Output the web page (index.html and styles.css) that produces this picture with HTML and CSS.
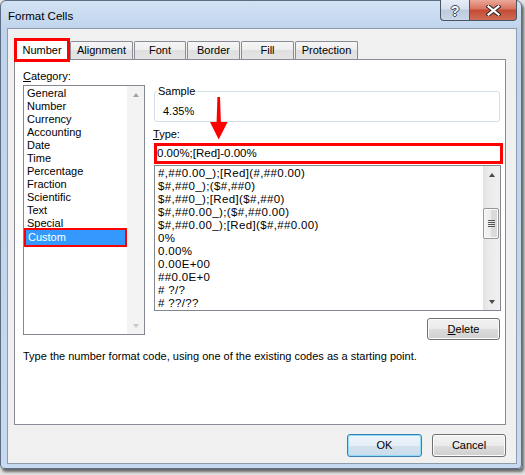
FILE: index.html
```html
<!DOCTYPE html>
<html>
<head>
<meta charset="utf-8">
<title>Format Cells</title>
<link rel="stylesheet" href="styles.css">
</head>
<body>
<div class="window">
  <div class="titlebar">
    <span class="title">Format Cells</span>
    <div class="caption">
      <div class="cap-btn help">?</div>
      <div class="cap-btn close">
        <svg width="15" height="11" viewBox="0 0 15 11">
          <path d="M2.5 1.5 L12.5 9.5 M12.5 1.5 L2.5 9.5" stroke="#3b2a2a" stroke-width="4.2" stroke-linecap="square" fill="none"/>
          <path d="M2.5 1.5 L12.5 9.5 M12.5 1.5 L2.5 9.5" stroke="#ffffff" stroke-width="2.2" stroke-linecap="square" fill="none"/>
        </svg>
      </div>
    </div>
  </div>
  <div class="client">
    <div class="tabs">
      <div class="tab selected">Number</div>
      <div class="tab t-align">Alignment</div>
      <div class="tab t-font">Font</div>
      <div class="tab t-border">Border</div>
      <div class="tab t-fill">Fill</div>
      <div class="tab t-prot">Protection</div>
    </div>
    <div class="panel">
      <div class="cols">
        <div class="left">
          <div class="label"><u>C</u>ategory:</div>
          <div class="listbox cat">
            <div class="items">
              <div class="item">General</div>
              <div class="item">Number</div>
              <div class="item">Currency</div>
              <div class="item">Accounting</div>
              <div class="item">Date</div>
              <div class="item">Time</div>
              <div class="item">Percentage</div>
              <div class="item">Fraction</div>
              <div class="item">Scientific</div>
              <div class="item">Text</div>
              <div class="item">Special</div>
              <div class="item sel">Custom</div>
            </div>
            <div class="vscroll disabled">
              <span class="arr up"></span>
              <span class="arr down"></span>
            </div>
          </div>
        </div>
        <div class="right">
          <fieldset class="sample">
            <legend>Sample</legend>
            <div class="sample-val">4.35%</div>
          </fieldset>
          <div class="label type-label"><u>T</u>ype:</div>
          <div class="typebox">0.00%;[Red]-0.00%</div>
          <div class="listbox codes">
            <div class="items">
              <div class="item">#,##0.00_);[Red](#,##0.00)</div>
              <div class="item">$#,##0_);($#,##0)</div>
              <div class="item">$#,##0_);[Red]($#,##0)</div>
              <div class="item">$#,##0.00_);($#,##0.00)</div>
              <div class="item">$#,##0.00_);[Red]($#,##0.00)</div>
              <div class="item">0%</div>
              <div class="item">0.00%</div>
              <div class="item">0.00E+00</div>
              <div class="item">##0.0E+0</div>
              <div class="item"># ?/?</div>
              <div class="item"># ??/??</div>
            </div>
            <div class="vscroll">
              <span class="arr up"></span>
              <div class="thumb"><span class="grip"></span></div>
              <span class="arr down"></span>
            </div>
          </div>
          <div class="btnrow"><button class="btn"><u>D</u>elete</button></div>
        </div>
      </div>
      <p class="desc">Type the number format code, using one of the existing codes as a starting point.</p>
      <svg class="arrow" width="19" height="43" viewBox="0 0 19 43">
        <polygon points="7.4,0 10,0 10.9,25 17.6,25 8.7,42.5 0,25 6.6,25" fill="#ff0000"/>
      </svg>
    </div>
    <div class="footer">
      <button class="btn default">OK</button>
      <button class="btn cancel">Cancel</button>
    </div>
  </div>
</div>
</body>
</html>
```

FILE: styles.css
```css
* { box-sizing: border-box; }

html, body {
  margin: 0;
  width: 525px;
  height: 475px;
  overflow: hidden;
}

body {
  background: #e4e4e4;
  font: 11px/13px "Liberation Sans", Arial, sans-serif;
  color: #000;
}

.window {
  width: 522px;
  height: 469px;
  border: 1px solid #5d6d82;
  border-radius: 6px 6px 4px 4px;
  background: linear-gradient(180deg, #d3e2f4 0%, #bfd4ec 28px, #c2d6ee 60%, #c8daf0 100%);
  padding: 0 4px 4px 6px;
  display: flex;
  flex-direction: column;
  box-shadow: 2px 3px 3px rgba(0, 0, 0, 0.55);
}

/* title bar */
.titlebar {
  height: 27px;
  flex: none;
  display: flex;
  justify-content: space-between;
  align-items: flex-start;
}

.title {
  padding: 8px 0 0 1px;
  font-size: 11.5px;
  line-height: 14px;
}

.caption {
  display: flex;
  margin-top: -1px;
}

.cap-btn {
  height: 21px;
  border: 1px solid #4c5566;
  border-top: none;
  display: flex;
  align-items: center;
  justify-content: center;
}

.help {
  width: 29px;
  border-right: none;
  border-radius: 0 0 0 4px;
  background: linear-gradient(180deg, #e6edf6 0%, #d5e0ed 45%, #bccbdd 50%, #c9d6e6 100%);
  color: #fff;
  font: bold 14px/1 "Liberation Sans", Arial, sans-serif;
  text-shadow: 1px 0 0 #3a4656, -1px 0 0 #3a4656, 0 1px 0 #3a4656, 0 -1px 0 #3a4656;
  padding-top: 1px;
}

.close {
  width: 48px;
  border-radius: 0 0 4px 0;
  background: linear-gradient(180deg, #eaa899 0%, #d8735f 45%, #c44a34 50%, #cf6c57 100%);
}

/* client area */
.client {
  flex: 1;
  background: #f0f0f0;
  border: 1px solid #8e9bab;
  padding: 9px 10px 0 6px;
  display: flex;
  flex-direction: column;
}

.tabs {
  height: 21px;
  flex: none;
  display: flex;
  align-items: flex-end;
  gap: 1px;
  position: relative;
  z-index: 1;
}

.tab {
  height: 18px;
  border: 1px solid #898c95;
  border-bottom: none;
  border-radius: 2px 2px 0 0;
  background: linear-gradient(180deg, #f6f6f6 0%, #ededed 50%, #e0e0e0 50%, #e4e4e4 100%);
  text-align: center;
  line-height: 16px;
  white-space: nowrap;
}

.tab.selected {
  width: 56px;
  height: 24px;
  margin-bottom: -3px;
  border: 3px solid #ff0000;
  border-radius: 0;
  background: #fff;
  padding-top: 1px;
}

.t-align { width: 63px; margin-left: -1px; }
.t-font { width: 52px; }
.t-border { width: 53px; }
.t-fill { width: 53px; }
.t-prot { width: 63px; }

.panel {
  height: 366px;
  flex: none;
  border: 1px solid #898c95;
  background: #fff;
  position: relative;
  padding: 10px 0 0 8px;
}

.cols {
  height: 280px;
  display: flex;
  align-items: flex-start;
  gap: 9px;
}

.left { width: 122px; }

.label {
  line-height: 13px;
  margin-bottom: 2px;
}

.listbox {
  border: 1px solid #828790;
  background: #fff;
  display: flex;
}

.items {
  flex: 1;
  min-width: 0;
}

.item {
  height: 13px;
  white-space: nowrap;
}

.cat { height: 250px; }

.cat .items { padding: 1px 0 0 2px; }

.cat .item { padding-left: 1px; }

.cat .item.sel {
  width: 99px;
  height: 15px;
  line-height: 14px;
  background: #3399ff;
  color: #fff;
  padding-left: 2px;
  outline: 2px solid #ff0000;
}

.vscroll {
  width: 17px;
  flex: none;
  display: flex;
  flex-direction: column;
  background: linear-gradient(90deg, #e2e2e2 0%, #ebebeb 35%, #f0f0f0 100%);
}

.vscroll.disabled {
  background: #f3f3f3;
}

.arr {
  height: 17px;
  flex: none;
  display: flex;
  align-items: center;
  justify-content: center;
}

.arr.up::before {
  content: "";
  border-left: 3.5px solid transparent;
  border-right: 3.5px solid transparent;
  border-bottom: 4px solid #4a4a4a;
}

.arr.down {
  margin-top: auto;
}

.arr.down::before {
  content: "";
  border-left: 3.5px solid transparent;
  border-right: 3.5px solid transparent;
  border-top: 4px solid #4a4a4a;
}

.disabled .arr.up::before { border-bottom-color: #a3a3a3; }
.disabled .arr.down::before { border-top-color: #c8c8c8; }

.thumb {
  height: 31px;
  margin: 25px 1px 0 0;
  border: 1px solid #979797;
  border-radius: 2px;
  background: linear-gradient(90deg, #f4f4f4 0%, #ececec 50%, #dcdcdc 50%, #d9d9d9 100%);
  box-shadow: inset 0 0 0 1px #fafafa;
  display: flex;
  align-items: center;
  justify-content: center;
}

.grip {
  width: 7px;
  height: 7px;
  background: repeating-linear-gradient(180deg, #595959 0 1px, transparent 1px 2px);
}

/* right column */
.right {
  width: 349px;
  margin-top: 15px;
  display: flex;
  flex-direction: column;
}

.sample {
  width: 346px;
  min-width: 0;
  margin: 0;
  border: 1px solid #d5dfe5;
  border-radius: 3px;
  padding: 7px 8px 3px;
}

.sample legend {
  padding: 0 1px;
  margin-left: -6px;
  line-height: 13px;
}

.sample-val { line-height: 13px; }

.type-label {
  margin-top: 6px;
  margin-left: -1px;
}

.typebox {
  width: 349px;
  height: 21px;
  border: 3px solid #ff0000;
  background: #fff;
  font-size: 11.5px;
  line-height: 15px;
  white-space: nowrap;
}

.codes {
  width: 347px;
  height: 146px;
  margin-top: 1px;
}

.codes .items {
  padding: 1px 0 0 3px;
  font-size: 11.5px;
  letter-spacing: 0.35px;
}

.btnrow {
  display: flex;
  justify-content: flex-end;
  margin-top: 7px;
  padding-right: 3px;
}

.btn {
  width: 73px;
  height: 22px;
  padding: 0;
  border: 1px solid #707070;
  border-radius: 3px;
  background: linear-gradient(180deg, #f2f2f2 0%, #ebebeb 50%, #dddddd 50%, #cfcfcf 100%);
  box-shadow: inset 0 0 0 1px #fcfcfc;
  font: 11px/13px "Liberation Sans", Arial, sans-serif;
  color: #000;
}

.desc {
  margin: 0;
  line-height: 13px;
}

.arrow {
  position: absolute;
  left: 195px;
  top: 37px;
}

.footer {
  display: flex;
  justify-content: flex-end;
  gap: 10px;
  margin-top: 9px;
}

.footer .btn {
  width: 74px;
  height: 23px;
}

.btn.default {
  width: 75px;
  border-color: #3c7fb1;
  box-shadow: inset 0 0 0 1px #8fdcf8;
  background: linear-gradient(180deg, #eef5fa 0%, #e4eef6 50%, #d4e2ee 50%, #c9dbea 100%);
}
```
